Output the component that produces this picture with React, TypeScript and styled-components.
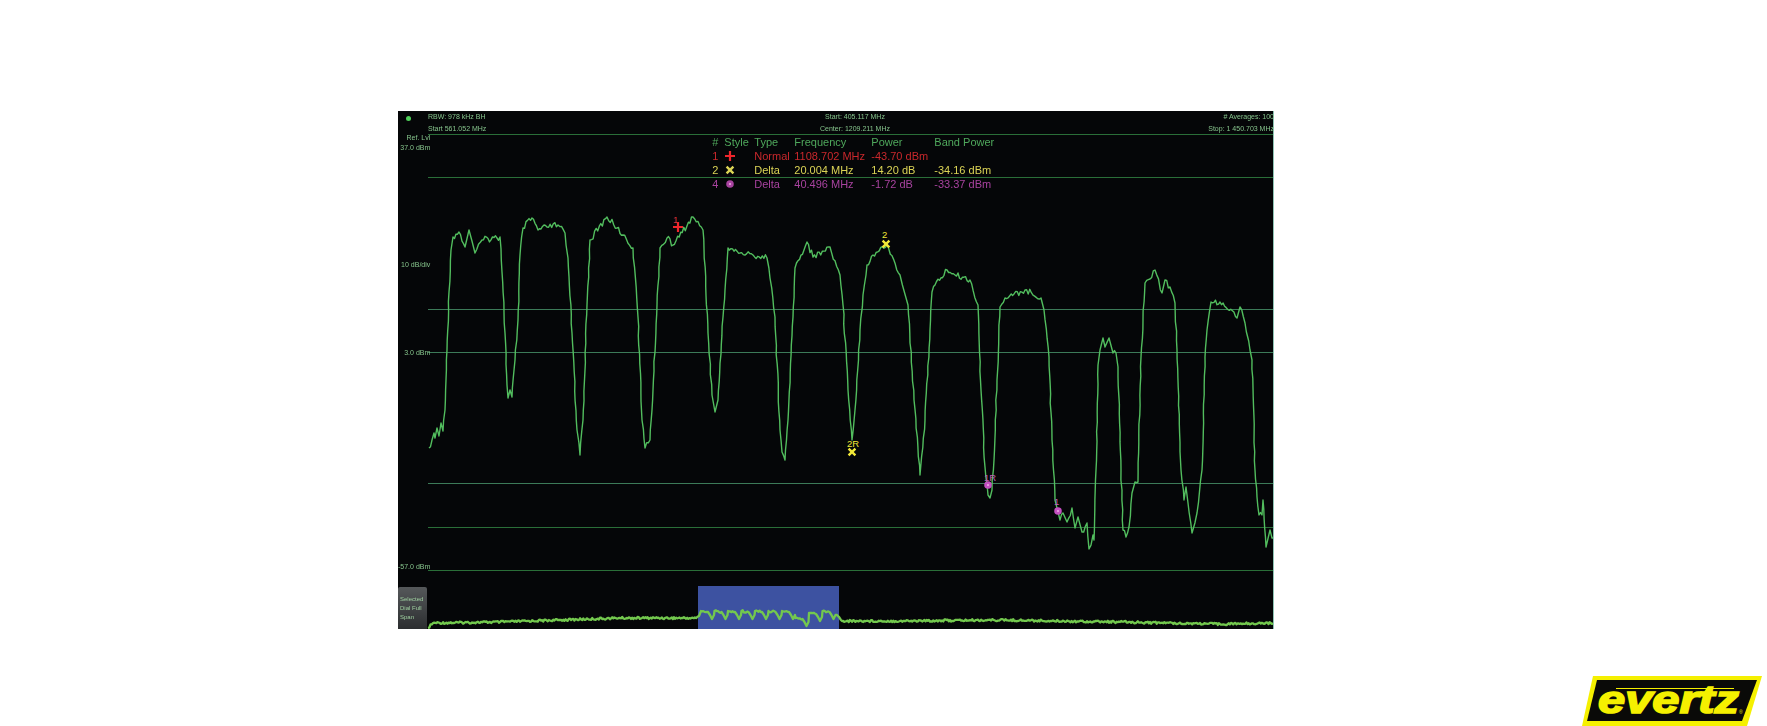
import React from "react";
import styled, { createGlobalStyle } from "styled-components";

const PANEL_X = 398;
const PANEL_Y = 111;

const GlobalStyle = createGlobalStyle`
  html, body {
    margin: 0;
    background: #fff;
    font-family: "Liberation Sans", Arial, sans-serif;
  }
`;

type Pt = [number, number];

// key points read off the reference, in page coordinates
const traceKeys: Pt[] = [
  [429, 448], [432, 440], [434, 433], [435, 438], [437, 428], [439, 436], [441, 423], [443, 431], [445, 410],
  [447, 350], [449, 292], [451, 250], [453, 237], [459, 232], [465, 247], [469, 230], [475, 253], [482, 240], [500, 237],
  [502, 272], [505, 333], [507, 385], [508, 398], [510, 390], [512, 397], [515, 360], [518, 320],
  [520, 255], [523, 228], [532, 218], [538, 230], [547, 227], [558, 225], [565, 233],
  [568, 258], [572, 333], [577, 430], [580, 455], [583, 420], [587, 305],
  [590, 240], [607, 217], [617, 228], [623, 235], [633, 248],
  [638, 317], [642, 420], [645, 448], [650, 440], [653, 390], [657, 305],
  [660, 248], [667, 238], [673, 245], [693, 217], [703, 230],
  [708, 333], [712, 395], [715, 412], [718, 400], [723, 317],
  [725, 290], [728, 248], [740, 253], [753, 255], [767, 258],
  [770, 278], [775, 317], [780, 430], [782, 452], [785, 460], [788, 420], [793, 317],
  [795, 268], [807, 242], [813, 257], [830, 247], [840, 275],
  [843, 305], [848, 390], [852, 440], [855, 410], [860, 330], [863, 295],
  [867, 265], [873, 255], [887, 245], [900, 275],
  [908, 305], [914, 400], [920, 475], [925, 420], [930, 330], [932, 292],
  [935, 285], [947, 270], [955, 275], [970, 280],
  [978, 305], [981, 390], [985, 467], [988, 495], [990, 498], [992, 490], [994, 460], [997, 380], [1000, 307],
  [1005, 298], [1025, 290], [1041, 298],
  [1044, 310], [1049, 357], [1052, 440], [1055, 500], [1058, 512], [1060, 520], [1063, 513], [1067, 522],
  [1072, 508], [1075, 528], [1078, 517], [1082, 532], [1087, 523], [1089, 549], [1093, 535], [1094, 540],
  [1096, 470], [1098, 365],
  [1100, 350], [1103, 338], [1105, 347], [1109, 338], [1113, 353], [1116, 353],
  [1118, 367], [1121, 470], [1123, 530], [1126, 537], [1129, 527], [1132, 493], [1135, 482], [1138, 482],
  [1141, 357], [1145, 283], [1155, 270], [1162, 293], [1165, 280], [1170, 287], [1175, 303],
  [1177, 350], [1181, 470], [1184, 500], [1186, 487], [1188, 503], [1192, 533], [1197, 513], [1202, 470],
  [1205, 357], [1207, 330], [1211, 302], [1220, 302], [1237, 318], [1240, 307], [1245, 323],
  [1250, 350], [1252, 360], [1255, 470], [1257, 497], [1259, 515], [1262, 515], [1263, 500],
  [1266, 547], [1270, 530], [1272, 538], [1274, 538],
];

const jitter = (i: number) => {
  const v = Math.sin(i * 12.9898) * 43758.5453;
  return (v - Math.floor(v)) * 2 - 1;
};

// adds analyser noise: strong along the flat channel tops, slight on the skirts
const roughen = (keys: Pt[], amp: number, step: number): string => {
  const out: Pt[] = [];
  let n = 0;
  keys.forEach((p, i) => {
    out.push(p);
    const next = keys[i + 1];
    if (!next) return;
    const dx = next[0] - p[0];
    const dy = next[1] - p[1];
    const steep = Math.abs(dy / dx) > 3.5;
    const count = steep ? Math.floor(Math.abs(dy) / 9) : Math.floor(dx / step);
    for (let k = 1; k < count; k++) {
      const t = k / count;
      n += 1;
      out.push(
        steep
          ? [p[0] + dx * t + jitter(n) * 0.45, p[1] + dy * t]
          : [p[0] + dx * t, p[1] + dy * t + jitter(n) * amp],
      );
    }
  });
  return out.map(([x, y], i) => `${i ? "L" : "M"}${(x - PANEL_X).toFixed(1)} ${(y - PANEL_Y).toFixed(1)}`).join(" ");
};

// the overview strip along the bottom of the panel
const overviewKeys: Pt[] = [
  [428, 628], [433, 623], [500, 622], [560, 620], [620, 618], [696, 618], [699, 616],
  ...Array.from({ length: 10 }, (_, i): Pt[] => {
    const x = 701 + i * 13.5;
    const drop = i === 7 ? 7 : i === 8 ? 2 : 0;
    return [[x, 611 + drop], [x + 7, 612 + drop], [x + 9, 615 + drop], [x + 11, 619 + drop], [x + 13, 615 + drop]];
  }).flat(),
  [838, 616], [842, 621], [900, 621], [1000, 620], [1120, 622], [1220, 624], [1274, 623],
];

const gridLines = [
  { y: 134, light: false },
  { y: 177, light: false },
  { y: 309, light: true },
  { y: 352, light: true },
  { y: 483, light: true },
  { y: 527, light: false },
  { y: 570, light: false },
];

const markerRows = [
  { id: "1", glyph: "plus", type: "Normal", freq: "1108.702 MHz", power: "-43.70 dBm", band: "", color: "#c9282c" },
  { id: "2", glyph: "cross", type: "Delta", freq: "20.004 MHz", power: "14.20 dB", band: "-34.16 dBm", color: "#dcd456" },
  { id: "4", glyph: "dot", type: "Delta", freq: "40.496 MHz", power: "-1.72 dB", band: "-33.37 dBm", color: "#a8439f" },
];

const MarkerGlyph: React.FC<{ kind: string; color: string; x?: number; y?: number }> = ({ kind, color, x = 5, y = 5 }) => {
  if (kind === "plus") {
    return <path d={`M${x - 5} ${y}H${x + 5}M${x} ${y - 5}V${y + 5}`} stroke={color} strokeWidth={2.2} fill="none" />;
  }
  if (kind === "cross") {
    return <path d={`M${x - 3.4} ${y - 3.4}L${x + 3.4} ${y + 3.4}M${x + 3.4} ${y - 3.4}L${x - 3.4} ${y + 3.4}`} stroke={color} strokeWidth={2.4} fill="none" />;
  }
  return (
    <g>
      <circle cx={x} cy={y} r={3.8} fill={color} />
      <circle cx={x} cy={y} r={1.1} fill="#e9a7e2" />
    </g>
  );
};

const App: React.FC = () => {
  const trace = React.useMemo(() => roughen(traceKeys, 3.2, 1.5), []);
  const overview = React.useMemo(() => roughen(overviewKeys, 1.1, 1.1), []);

  return (
    <Page>
      <GlobalStyle />
      <Panel>
        <Plot viewBox="0 0 876 518">
          {gridLines.map((line) => (
            <line
              key={line.y}
              x1={30}
              x2={876}
              y1={line.y - PANEL_Y + 0.5}
              y2={line.y - PANEL_Y + 0.5}
              stroke={line.light ? "#3c7a58" : "#2a6e38"}
              strokeWidth={1.2}
            />
          ))}
          <rect x={300} y={475} width={141} height={43} fill="#3d52a1" />
          <path d={trace} fill="none" stroke="#52bd5e" strokeWidth={1.4} strokeLinejoin="round" />
          <path d={overview} fill="none" stroke="#73c84e" strokeWidth={2.3} strokeLinejoin="round" />

          <MarkerGlyph kind="plus" color="#f0262c" x={280} y={116} />
          <MarkerLabel x={275} y={112} fill="#d9303a">1</MarkerLabel>
          <MarkerGlyph kind="cross" color="#f2e838" x={488} y={133} />
          <MarkerLabel x={484} y={127} fill="#f2e838">2</MarkerLabel>
          <MarkerGlyph kind="cross" color="#f2e838" x={454} y={341} />
          <MarkerLabel x={449} y={336} fill="#f2e838">2R</MarkerLabel>
          <MarkerGlyph kind="dot" color="#c44fc0" x={590} y={374} />
          <MarkerLabel x={586} y={370} fill="#c060b8">1R</MarkerLabel>
          <MarkerGlyph kind="dot" color="#c44fc0" x={660} y={400} />
          <MarkerLabel x={656} y={394} fill="#c060b8">1</MarkerLabel>
          <line x1={875.5} x2={875.5} y1={0} y2={518} stroke="#8fc4b4" strokeWidth={1} />
        </Plot>

        <Header>
          <StatusDot />
          <Readout>
            <span>RBW: 978 kHz BH</span>
            <span>Start 561.052 MHz</span>
          </Readout>
          <Readout $align="center" $shift={8}>
            <span>Start: 405.117 MHz</span>
            <span>Center: 1209.211 MHz</span>
          </Readout>
          <Readout $align="right">
            <span># Averages: 100</span>
            <span>Stop: 1 450.703 MHz</span>
          </Readout>
        </Header>

        <Body>
          <AxisColumn>
            <AxisLabel $gap={-1}>
              Ref. Lvl
              <br />
              37.0 dBm
            </AxisLabel>
            <AxisLabel $gap={107}>10 dB/div</AxisLabel>
            <AxisLabel $gap={78}>3.0 dBm</AxisLabel>
            <AxisLabel $gap={204}>-57.0 dBm</AxisLabel>
            <SpanButton>
              Selected
              <br />
              Dial Full
              <br />
              Span
            </SpanButton>
          </AxisColumn>

          <MarkerTable>
            <MarkerHeader>
              <span>#</span>
              <span>Style</span>
              <span>Type</span>
              <span>Frequency</span>
              <span>Power</span>
              <span>Band Power</span>
            </MarkerHeader>
            {markerRows.map((row) => (
              <MarkerRow key={row.id} $color={row.color}>
                <span>{row.id}</span>
                <GlyphBox viewBox="0 0 12 12">
                  <MarkerGlyph kind={row.glyph} color={row.glyph === "plus" ? "#f0262c" : row.color} x={6} y={6} />
                </GlyphBox>
                <span>{row.type}</span>
                <span>{row.freq}</span>
                <span>{row.power}</span>
                <span>{row.band}</span>
              </MarkerRow>
            ))}
          </MarkerTable>
        </Body>
      </Panel>

      <LogoRow>
        <svg width="181" height="50" viewBox="0 0 181 50">
          <polygon points="12,0 181,0 166,50 1,50" fill="#f5f000" />
          <polygon points="16,4 176,4 161,45 6,45" fill="#0a0a08" />
          <line x1="35" x2="153" y1="12.5" y2="12.5" stroke="#f5f000" strokeWidth="1" />
          <LogoText x="17" y="37" textLength="141" lengthAdjust="spacingAndGlyphs">
            evertz
          </LogoText>
          <LogoMark x="158" y="38">®</LogoMark>
        </svg>
      </LogoRow>
    </Page>
  );
};

const Page = styled.div`
  box-sizing: border-box;
  height: 726px;
  overflow: hidden;
  padding: ${PANEL_Y}px 0 0 ${PANEL_X}px;
`;

const Panel = styled.div`
  background: #050608;
  display: flex;
  flex-direction: column;
  height: 518px;
  position: relative;
  width: 876px;
`;

const Plot = styled.svg`
  height: 100%;
  left: 0;
  position: absolute;
  top: 0;
  width: 100%;
`;

const MarkerLabel = styled.text`
  font-family: "Liberation Sans", Arial, sans-serif;
  font-size: 9.5px;
`;

const Header = styled.div`
  align-items: center;
  display: grid;
  grid-template-columns: 30px 1fr auto 1fr;
  height: 23px;
  position: relative;
`;

const StatusDot = styled.i`
  background: #4fd05a;
  border-radius: 50%;
  height: 5px;
  margin: -9px 0 0 8px;
  width: 5px;
`;

const Readout = styled.div<{ $align?: string; $shift?: number }>`
  color: #86c48c;
  display: flex;
  filter: blur(0.45px);
  flex-direction: column;
  font-size: 7px;
  line-height: 12px;
  padding-left: ${(p) => p.$shift ?? 0}px;
  text-align: ${(p) => p.$align ?? "left"};
  white-space: nowrap;
`;

const Body = styled.div`
  display: flex;
  flex: 1;
  position: relative;
`;

const AxisColumn = styled.div`
  display: flex;
  flex: 0 0 30px;
  flex-direction: column;
`;

const AxisLabel = styled.div<{ $gap: number }>`
  color: #86c48c;
  filter: blur(0.45px);
  font-size: 7px;
  line-height: 10px;
  margin-top: ${(p) => p.$gap}px;
  padding-right: 1px;
  text-align: right;
  white-space: nowrap;
`;

const SpanButton = styled.div`
  background: linear-gradient(#55585a, #2c2e30);
  border-radius: 2px 2px 0 0;
  box-sizing: border-box;
  color: #9fd0a0;
  filter: blur(0.4px);
  font-size: 6px;
  height: 42px;
  line-height: 9px;
  margin-top: auto;
  padding: 8px 0 0 2px;
  width: 29px;
`;

const MarkerTable = styled.div`
  display: flex;
  filter: blur(0.25px);
  flex-direction: column;
  font-size: 11px;
  line-height: 14px;
  padding: 1px 0 0 281px;
`;

const MarkerHeader = styled.div`
  color: #4fa85c;
  display: grid;
  grid-template-columns: 12px 30px 40px 77px 63px auto;
  white-space: nowrap;
`;

const MarkerRow = styled(MarkerHeader)<{ $color: string }>`
  align-items: center;
  color: ${(p) => p.$color};
`;

const GlyphBox = styled.svg`
  height: 12px;
  width: 12px;
`;

const LogoRow = styled.div`
  display: flex;
  justify-content: flex-end;
  margin: 47px 5px 0 0;
`;

const LogoText = styled.text`
  fill: #f5f000;
  font-family: "Liberation Sans", Arial, sans-serif;
  font-size: 38px;
  font-style: italic;
  font-weight: 700;
  stroke: #f5f000;
  stroke-width: 1.6;
`;

const LogoMark = styled.text`
  fill: #f5f000;
  font-family: "Liberation Sans", Arial, sans-serif;
  font-size: 5px;
`;

export default App;
